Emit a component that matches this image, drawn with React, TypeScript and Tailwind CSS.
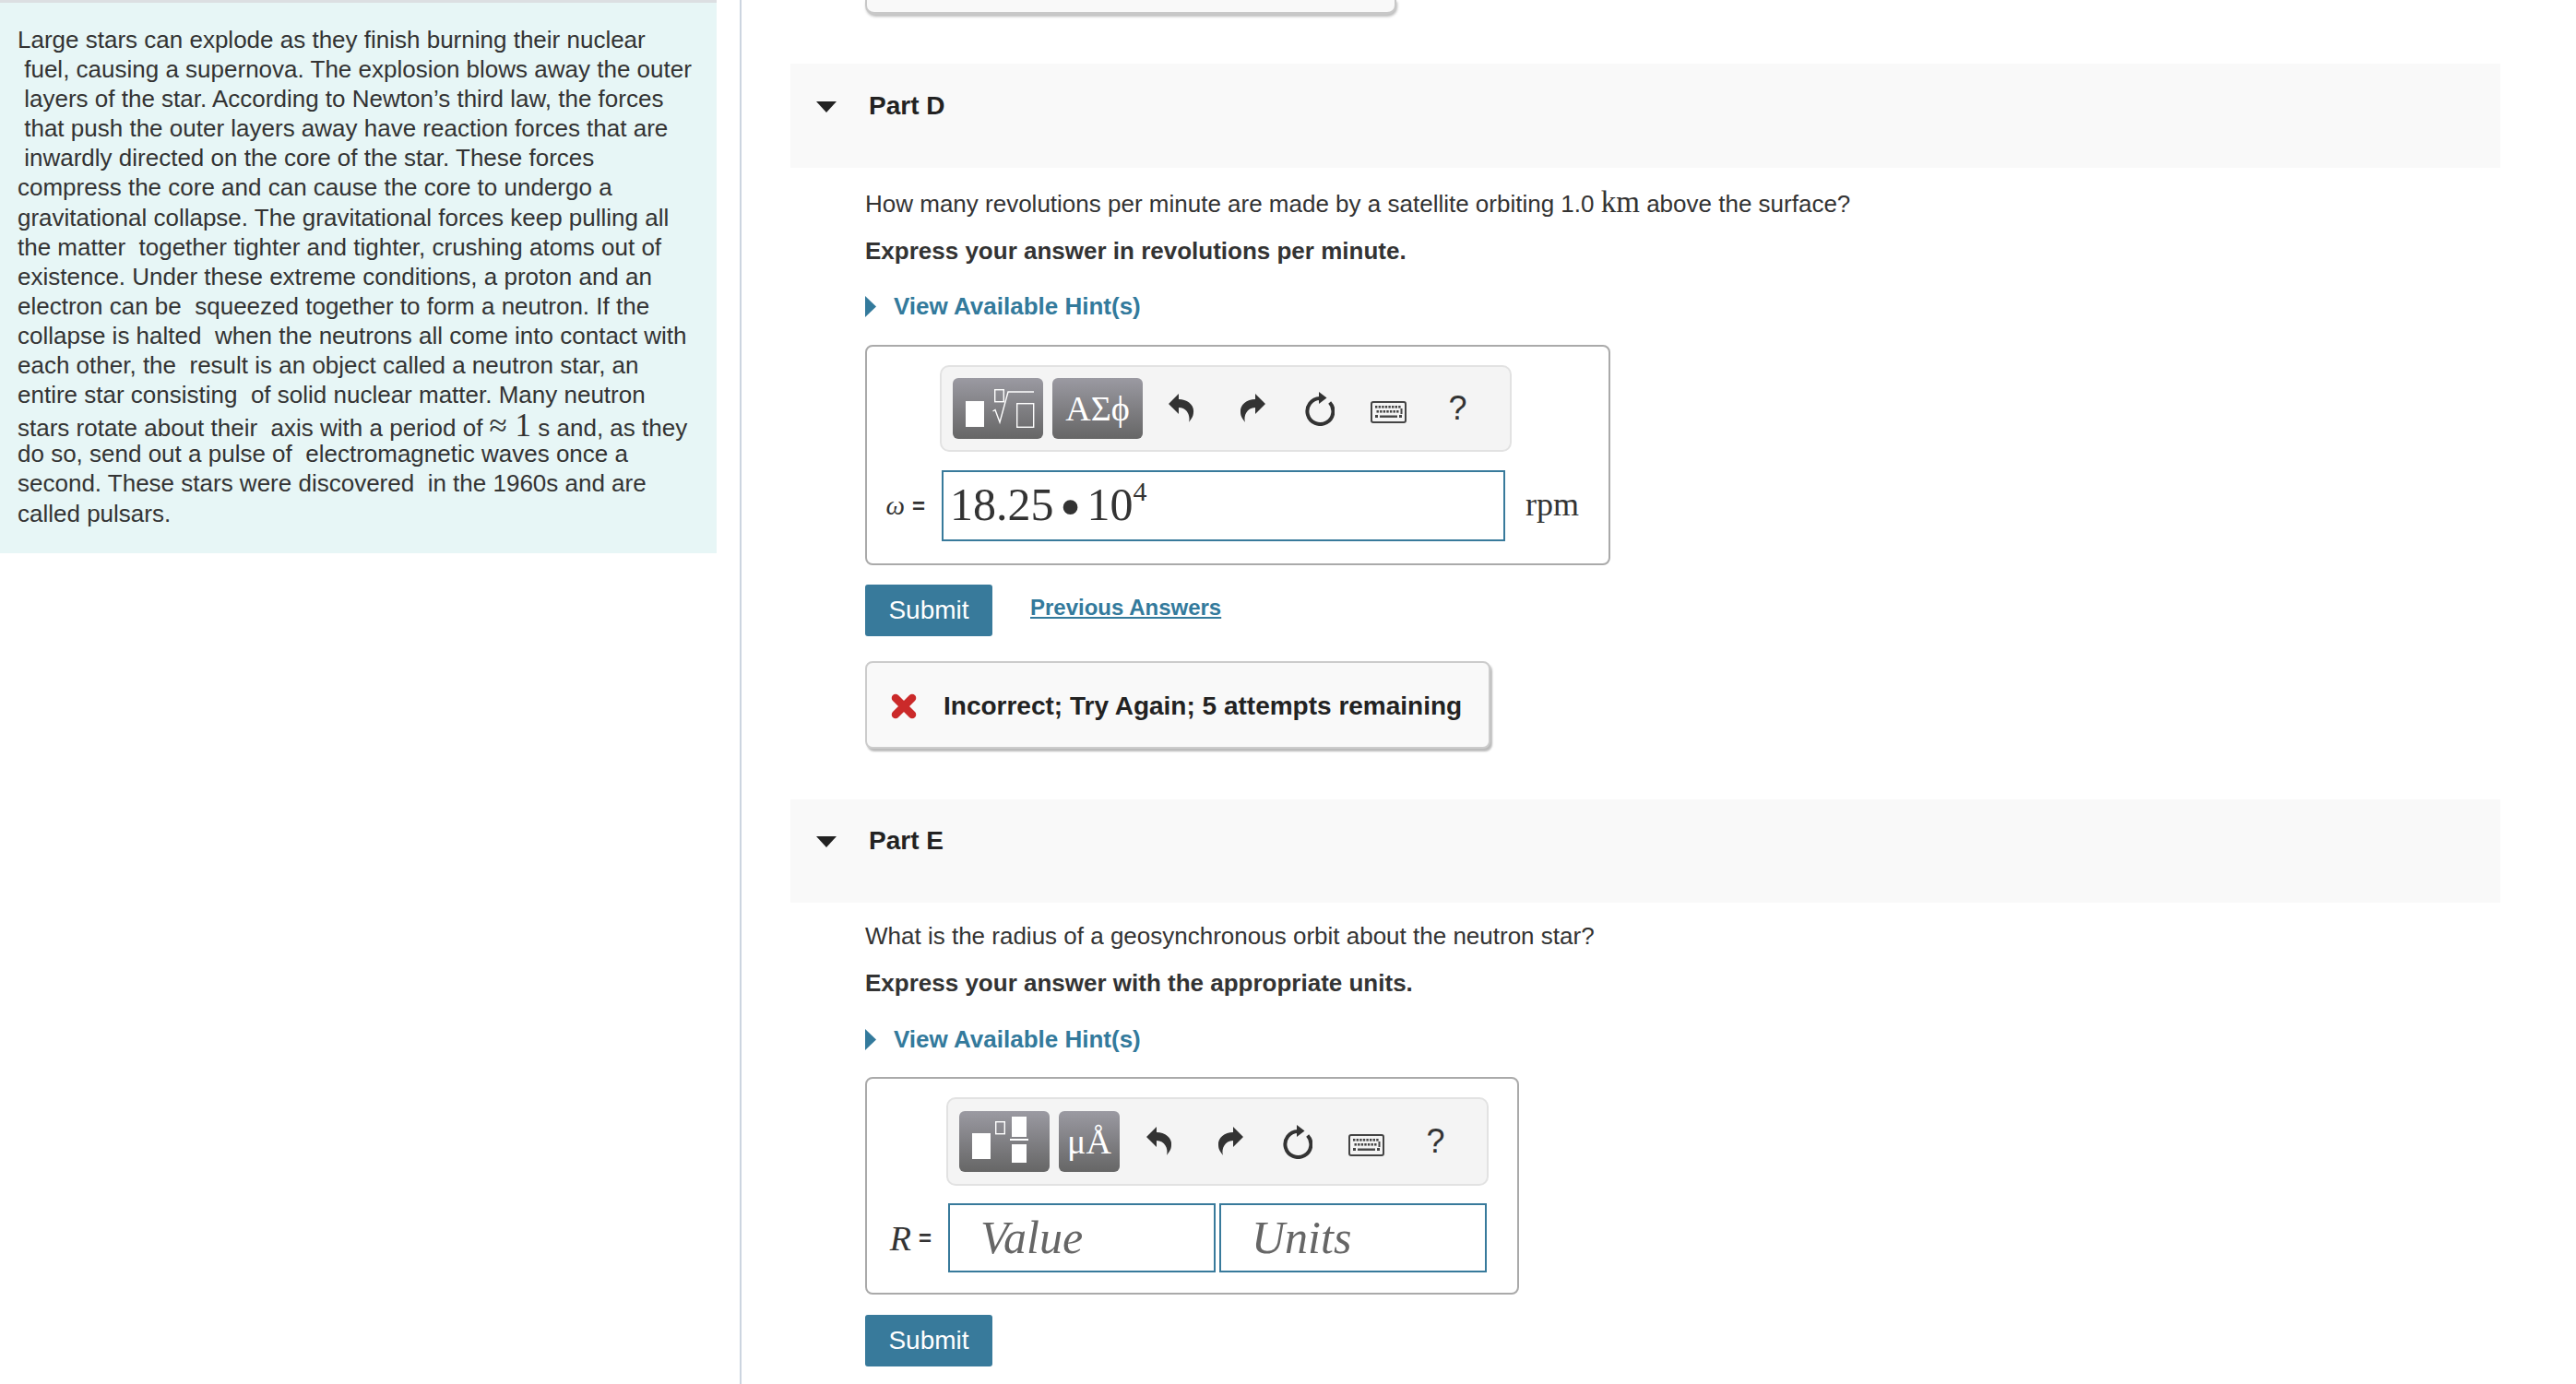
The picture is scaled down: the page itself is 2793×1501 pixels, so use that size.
import React from "react";

const SANS = "font-['Liberation_Sans',Arial,sans-serif]";
const SERIF = "font-['Liberation_Serif','Times_New_Roman',serif]";

const passage: React.ReactNode[] = [
    "Large stars can explode as they finish burning their nuclear",
    " fuel, causing a supernova. The explosion blows away the outer",
    " layers of the star. According to Newton’s third law, the forces",
    " that push the outer layers away have reaction forces that are",
    " inwardly directed on the core of the star. These forces",
    "compress the core and can cause the core to undergo a",
    "gravitational collapse. The gravitational forces keep pulling all",
    "the matter  together tighter and tighter, crushing atoms out of",
    "existence. Under these extreme conditions, a proton and an",
    "electron can be  squeezed together to form a neutron. If the",
    "collapse is halted  when the neutrons all come into contact with",
    "each other, the  result is an object called a neutron star, an",
    "entire star consisting  of solid nuclear matter. Many neutron",
    <>
        stars rotate about their  axis with a period of{" "}
        <span className={`${SERIF} text-[35px] leading-none`}>≈ 1</span> s and, as they
    </>,
    "do so, send out a pulse of  electromagnetic waves once a",
    "second. These stars were discovered  in the 1960s and are",
    "called pulsars.",
];

function UndoIcon({ flip }: { flip?: boolean }) {
    return (
        <svg width="28" height="32" viewBox="0 0 28 32" className={flip ? "-scale-x-100" : ""}>
            <path d="M0 11 L11 0 V6 C20 6 28 12 27 20 C27 25 24 28 22 31 C24 24 20 15 11 15 V22 Z" fill="#333333" />
        </svg>
    );
}

function RefreshIcon() {
    return (
        <svg width="32" height="37" viewBox="0 0 32 37">
            <path d="M16 7 A14 14 0 1 0 26.7 11.5" fill="none" stroke="#333333" strokeWidth="4" />
            <path d="M15 0 L23.5 6.5 L15 13 Z" fill="#333333" />
        </svg>
    );
}

function KeyboardIcon() {
    const keys = [0, 1, 2, 3, 4, 5, 6, 7];
    return (
        <svg width="39" height="24" viewBox="0 0 39 24">
            <rect x="1" y="1" width="37" height="22" rx="2" fill="#f4f4f4" stroke="#444444" strokeWidth="2" />
            {keys.map((k) => (
                <rect key={k} x={5 + k * 3.6} y="5" width="2.4" height="2.6" fill="#444444" />
            ))}
            {keys.slice(0, 7).map((k) => (
                <rect key={k} x={6.5 + k * 3.6} y="10" width="2.4" height="2.6" fill="#444444" />
            ))}
            <rect x="5" y="15" width="3" height="3" fill="#444444" />
            <rect x="10" y="15.5" width="19" height="2.4" fill="#444444" />
            <rect x="31" y="15" width="3" height="3" fill="#444444" />
            <rect x="32.5" y="8" width="2" height="6" fill="#444444" />
        </svg>
    );
}

function TemplatesRootIcon() {
    return (
        <svg width="98" height="65" viewBox="0 0 98 65">
            <rect x="14" y="24" width="20" height="28" fill="#ffffff" />
            <rect x="45.7" y="11.7" width="9.6" height="13" fill="none" stroke="#ffffff" strokeWidth="1.4" />
            <path d="M43.5 35 L46 33.5 L51 47 L60 14 H88" fill="none" stroke="#ffffff" strokeWidth="1.4" />
            <rect x="69.7" y="26.7" width="18" height="25.6" fill="none" stroke="#ffffff" strokeWidth="1.4" />
        </svg>
    );
}

function TemplatesFractionIcon() {
    return (
        <svg width="98" height="66" viewBox="0 0 98 66">
            <rect x="14" y="24" width="20" height="28" fill="#ffffff" />
            <rect x="39.7" y="11.7" width="9.6" height="13" fill="none" stroke="#ffffff" strokeWidth="1.4" />
            <rect x="57" y="6" width="16" height="22" fill="#ffffff" />
            <rect x="55" y="30" width="20" height="2" fill="#ffffff" />
            <rect x="57" y="36" width="16" height="20" fill="#ffffff" />
        </svg>
    );
}

function ToolButton({ className, children }: { className: string; children: React.ReactNode }) {
    return (
        <div className={`flex h-[66px] items-center justify-center rounded-[6px] bg-linear-to-b from-[#9b9aa2] to-[#666666] ${className}`}>
            {children}
        </div>
    );
}

function Toolbar({
    className,
    first,
    second,
    secondClass,
    slotsClass,
}: {
    className: string;
    first: React.ReactNode;
    second: React.ReactNode;
    secondClass: string;
    slotsClass: string;
}) {
    return (
        <div className={`flex items-center rounded-[10px] border-2 border-[#e2e2e2] bg-[#f4f4f4] ${className}`}>
            <ToolButton className="w-[98px]">{first}</ToolButton>
            <ToolButton className={`ml-[10px] ${secondClass}`}>{second}</ToolButton>
            <div className={`flex items-center ${slotsClass}`}>
                <div className="flex w-[75px] justify-center pl-[1px]"><UndoIcon /></div>
                <div className="flex w-[75px] justify-center pl-[5px]"><UndoIcon flip /></div>
                <div className="flex w-[75px] justify-center"><RefreshIcon /></div>
                <div className="flex w-[75px] justify-center pt-[8px]"><KeyboardIcon /></div>
                <div className={`flex w-[75px] justify-center text-[36px] leading-none text-[#333333] ${SANS}`}>?</div>
            </div>
        </div>
    );
}

function PartHeader({ title, className }: { title: string; className: string }) {
    return (
        <div className={`flex items-start bg-[#f9f9f9] pl-[28px] ${className}`}>
            <svg width="22" height="12" viewBox="0 0 22 12" className="mt-[11px]">
                <path d="M0 0 H22 L11 12 Z" fill="#222222" />
            </svg>
            <span className="ml-[35px] text-[28px] leading-[32px] font-bold text-[#222222]">{title}</span>
        </div>
    );
}

function HintLink({ className }: { className: string }) {
    return (
        <div className={`flex h-[32px] items-center text-[26px] font-bold text-[#337a9c] ${className}`}>
            <svg width="12" height="23" viewBox="0 0 12 23">
                <path d="M0 0 L12 11.5 L0 23 Z" fill="#337a9c" />
            </svg>
            <span className="ml-[19px]">View Available Hint(s)</span>
        </div>
    );
}

function SubmitButton() {
    return (
        <div className="flex h-[56px] w-[138px] items-center justify-center rounded-[3px] bg-[#387a9b] text-[28px] text-white">
            Submit
        </div>
    );
}

export default function App() {
    return (
        <div className={`flex h-[1501px] w-[2793px] overflow-hidden bg-white text-[#333333] ${SANS}`}>
            <div className="w-[804px] shrink-0 border-r-2 border-[#ccd5e0]">
                <div className="h-[600px] w-[777px] border-t-[3px] border-[#dcdfe2] bg-[#e7f6f6] pl-[19px] pt-[24px]">
                    {passage.map((line, i) => (
                        <div key={i} className="h-[32.1px] text-[26px] leading-[32px] whitespace-pre">
                            {line}
                        </div>
                    ))}
                </div>
            </div>

            <div className="w-[1907px] shrink-0 pl-[53px]">
                <div className="ml-[81px] h-[16px] w-[576px] rounded-b-[10px] border-x-2 border-b-[3px] border-[#c8c8c8] bg-[#f9f9f9] shadow-[1px_2px_3px_#bbbbbb]" />

                <PartHeader title="Part D" className="mt-[53px] h-[113px] pt-[30px]" />
                <div className="pl-[81px]">
                    <div className="mt-[21px] h-[32px] text-[26px] leading-[32px]">
                        How many revolutions per minute are made by a satellite orbiting 1.0{" "}
                        <span className={`${SERIF} text-[33px] leading-none`}>km</span> above the surface?
                    </div>
                    <div className="mt-[21px] h-[32px] text-[26px] leading-[32px] font-bold">
                        Express your answer in revolutions per minute.
                    </div>
                    <HintLink className="mt-[28px]" />

                    <div className="mt-[26px] h-[239px] w-[808px] rounded-[8px] border-2 border-[#aaaaaa] pt-[20px]">
                        <Toolbar
                            className="ml-[79px] h-[94px] w-[620px] pl-[12px]"
                            first={<TemplatesRootIcon />}
                            second={<span className={`${SERIF} text-[38px] leading-none text-white`}>ΑΣϕ</span>}
                            secondClass="w-[98px]"
                            slotsClass="ml-[4px]"
                        />
                        <div className="mt-[20px] flex items-center">
                            <div className={`flex w-[81px] items-center justify-end pr-[18px] text-[29px] leading-none ${SERIF}`}>
                                <i>ω</i>
                                <span className={`ml-[8px] font-bold ${SANS} text-[24px]`}>=</span>
                            </div>
                            <div className={`flex h-[77px] w-[611px] items-center border-2 border-[#387a9b] pl-[7px] text-[50px] leading-none ${SERIF}`}>
                                <span className="relative -top-[7px]">
                                    18.25
                                    <span className="relative top-[8px] inline-block w-[36px] text-center text-[66px] leading-none">•</span>
                                    10
                                    <sup className="relative -top-[21px] align-baseline text-[30px] leading-none">4</sup>
                                </span>
                            </div>
                            <div className={`ml-[22px] -mt-[4px] text-[36px] ${SERIF}`}>rpm</div>
                        </div>
                    </div>

                    <div className="mt-[21px] flex items-start">
                        <SubmitButton />
                        <div className="ml-[41px] mt-[8px] text-[24px] leading-[34px] font-bold text-[#337a9c] underline">
                            Previous Answers
                        </div>
                    </div>

                    <div className="mt-[27px] flex h-[95px] w-[678px] items-center rounded-[8px] border-2 border-[#cccccc] bg-[#f9f9f9] pl-[26px] pt-[2px] shadow-[2px_3px_2px_#bbbbbb]">
                        <svg width="28" height="28" viewBox="0 0 28 28">
                            <path d="M5 5 L23 23 M23 5 L5 23" stroke="#cb2a2a" strokeWidth="8.5" strokeLinecap="round" />
                        </svg>
                        <span className="ml-[29px] text-[28px] font-bold text-[#222222]">
                            Incorrect; Try Again; 5 attempts remaining
                        </span>
                    </div>
                </div>

                <PartHeader title="Part E" className="mt-[55px] h-[112px] pt-[29px]" />
                <div className="pl-[81px]">
                    <div className="mt-[20px] h-[32px] text-[26px] leading-[32px]">
                        What is the radius of a geosynchronous orbit about the neutron star?
                    </div>
                    <div className="mt-[19px] h-[32px] text-[26px] leading-[32px] font-bold">
                        Express your answer with the appropriate units.
                    </div>
                    <HintLink className="mt-[29px]" />

                    <div className="mt-[25px] h-[236px] w-[709px] rounded-[8px] border-2 border-[#aaaaaa] pt-[20px]">
                        <Toolbar
                            className="ml-[86px] h-[96px] w-[588px] pl-[12px]"
                            first={<TemplatesFractionIcon />}
                            second={<span className={`${SERIF} text-[38px] text-white`}>μÅ</span>}
                            secondClass="w-[66px]"
                            slotsClass="ml-[5px]"
                        />
                        <div className="mt-[19px] flex items-center">
                            <div className={`flex w-[88px] items-center justify-end pr-[18px] text-[38px] leading-none ${SERIF}`}>
                                <i>R</i>
                                <span className={`ml-[8px] font-bold ${SANS} text-[24px]`}>=</span>
                            </div>
                            <div className={`flex h-[75px] w-[290px] items-center border-2 border-[#387a9b] pl-[33px] text-[50px] text-[#666666] italic ${SERIF}`}>
                                Value
                            </div>
                            <div className={`ml-[4px] flex h-[75px] w-[290px] items-center border-2 border-[#387a9b] pl-[33px] text-[50px] text-[#666666] italic ${SERIF}`}>
                                Units
                            </div>
                        </div>
                    </div>

                    <div className="mt-[22px]">
                        <SubmitButton />
                    </div>
                </div>
            </div>
        </div>
    );
}
